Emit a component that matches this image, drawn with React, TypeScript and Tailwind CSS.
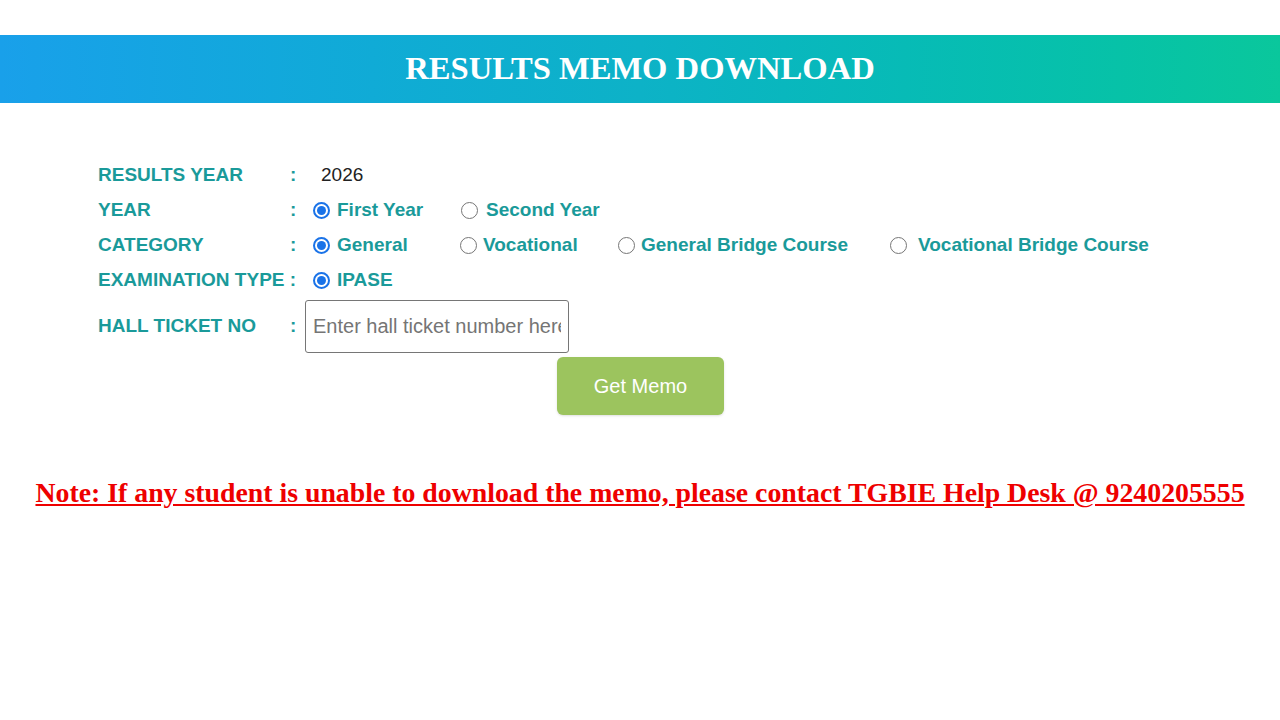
function Radio({ checked }: { checked?: boolean }) {
  if (checked) {
    return (
      <span className="w-[17px] h-[17px] rounded-full border-2 border-[#1a73e8] flex items-center justify-center shrink-0 bg-white">
        <span className="w-[9px] h-[9px] rounded-full bg-[#1a73e8]"></span>
      </span>
    );
  }
  return (
    <span className="w-[17px] h-[17px] rounded-full border border-[#767676] shrink-0 bg-white"></span>
  );
}

interface OptionProps {
  label: string;
  checked?: boolean;
  width: string;
  gap: string;
}

function Option({ label, checked, width, gap }: OptionProps) {
  return (
    <div className={`flex items-center ${width} ${gap}`}>
      <Radio checked={checked} />
      <span className="text-[#1a9a9a] font-bold text-[19px]">{label}</span>
    </div>
  );
}

function Row({
  label,
  noColon,
  children,
}: {
  label: string;
  noColon?: boolean;
  children: React.ReactNode;
}) {
  return (
    <div className="flex items-center h-[35px]">
      {noColon ? (
        <div className="w-[207px] text-[#1a9a9a] font-bold text-[19px] whitespace-nowrap">{label}</div>
      ) : (
        <>
          <div className="w-[192px] text-[#1a9a9a] font-bold text-[19px] whitespace-nowrap">{label}</div>
          <div className="w-[15px] text-[#1a9a9a] font-bold text-[19px]">:</div>
        </>
      )}
      <div className="flex items-center">{children}</div>
    </div>
  );
}

export default function App() {
  return (
    <div className="w-[1280px] h-[720px] bg-white font-['Liberation_Sans',Arial,sans-serif] overflow-hidden">
      <div className="h-[35px]"></div>
      <div className="h-[68px] bg-gradient-to-r from-[#19a0ea] via-[#0db2c7] to-[#0ac79c] flex items-center justify-center">
        <h1 className="text-white font-bold text-[32.6px] leading-none pb-[2px] font-['Liberation_Serif','Times_New_Roman',serif]">
          RESULTS MEMO DOWNLOAD
        </h1>
      </div>

      <div className="pl-[98px] pt-[55px]">
        <Row label="RESULTS YEAR">
          <span className="pl-4 text-[#222] text-[19px]">2026</span>
        </Row>
        <Row label="YEAR">
          <div className="flex items-center pl-2">
            <Option label="First Year" checked width="w-[148px]" gap="gap-[7px]" />
            <Option label="Second Year" width="w-[160px]" gap="gap-[8px]" />
          </div>
        </Row>
        <Row label="CATEGORY">
          <div className="flex items-center pl-2">
            <Option label="General" checked width="w-[147px]" gap="gap-[7px]" />
            <Option label="Vocational" width="w-[158px]" gap="gap-[6px]" />
            <Option label="General Bridge Course" width="w-[272px]" gap="gap-[6px]" />
            <Option label="Vocational Bridge Course" width="w-[280px]" gap="gap-[11px]" />
          </div>
        </Row>
        <Row label="EXAMINATION TYPE :" noColon>
          <div className="flex items-center pl-2">
            <Option label="IPASE" checked width="w-[120px]" gap="gap-[7px]" />
          </div>
        </Row>
        <div className="flex items-center mt-[2px]">
          <div className="w-[192px] text-[#1a9a9a] font-bold text-[19px]">HALL TICKET NO</div>
          <div className="w-[15px] text-[#1a9a9a] font-bold text-[19px]">:</div>
          <input
            type="text"
            placeholder="Enter hall ticket number here"
            className="w-[264px] h-[53px] border border-[#767676] rounded-[3px] px-[7px] text-[20px] text-[#333] placeholder:text-[#757575] outline-none"
          />
        </div>
        <div className="flex pl-[459px] mt-[4px]">
          <button className="w-[167px] h-[58px] rounded-[6px] bg-[#9cc45e] text-white text-[20px] shadow-sm">
            Get Memo
          </button>
        </div>
      </div>

      <div className="flex justify-center mt-[57px]">
        <p className="text-[#ee0000] font-bold text-[27.8px] underline font-['Liberation_Serif','Times_New_Roman',serif] whitespace-nowrap">
          Note: If any student is unable to download the memo, please contact TGBIE Help Desk @ 9240205555
        </p>
      </div>
    </div>
  );
}
